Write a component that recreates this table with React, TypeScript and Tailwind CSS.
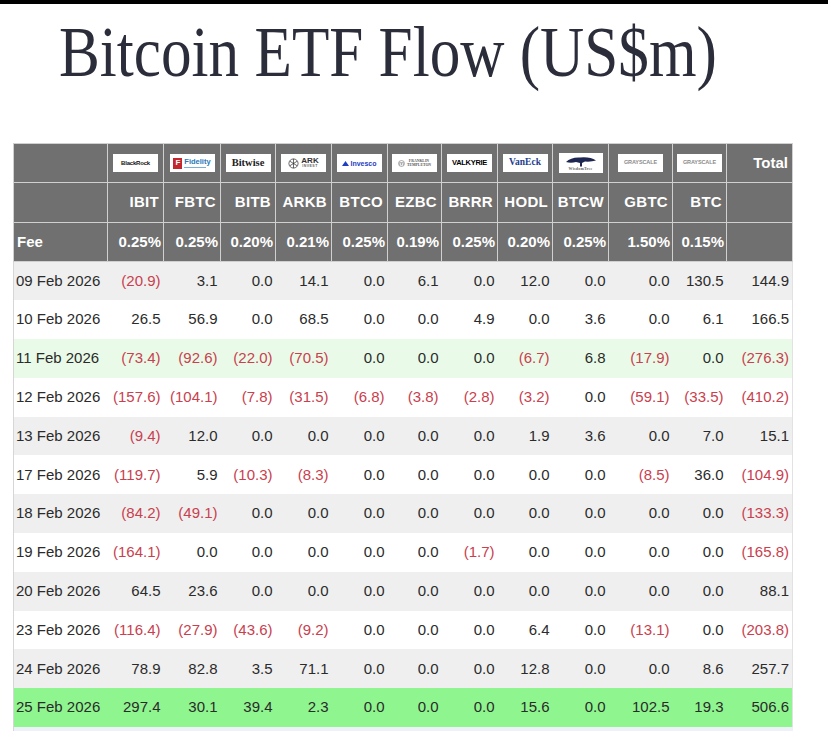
import React from "react";

type Row = { date: string; vals: string[]; tone: "gray" | "white" | "mint" | "green" };

const rows: Row[] = [
  { date: "09 Feb 2026", tone: "gray", vals: ["(20.9)", "3.1", "0.0", "14.1", "0.0", "6.1", "0.0", "12.0", "0.0", "0.0", "130.5", "144.9"] },
  { date: "10 Feb 2026", tone: "white", vals: ["26.5", "56.9", "0.0", "68.5", "0.0", "0.0", "4.9", "0.0", "3.6", "0.0", "6.1", "166.5"] },
  { date: "11 Feb 2026", tone: "mint", vals: ["(73.4)", "(92.6)", "(22.0)", "(70.5)", "0.0", "0.0", "0.0", "(6.7)", "6.8", "(17.9)", "0.0", "(276.3)"] },
  { date: "12 Feb 2026", tone: "white", vals: ["(157.6)", "(104.1)", "(7.8)", "(31.5)", "(6.8)", "(3.8)", "(2.8)", "(3.2)", "0.0", "(59.1)", "(33.5)", "(410.2)"] },
  { date: "13 Feb 2026", tone: "gray", vals: ["(9.4)", "12.0", "0.0", "0.0", "0.0", "0.0", "0.0", "1.9", "3.6", "0.0", "7.0", "15.1"] },
  { date: "17 Feb 2026", tone: "white", vals: ["(119.7)", "5.9", "(10.3)", "(8.3)", "0.0", "0.0", "0.0", "0.0", "0.0", "(8.5)", "36.0", "(104.9)"] },
  { date: "18 Feb 2026", tone: "gray", vals: ["(84.2)", "(49.1)", "0.0", "0.0", "0.0", "0.0", "0.0", "0.0", "0.0", "0.0", "0.0", "(133.3)"] },
  { date: "19 Feb 2026", tone: "white", vals: ["(164.1)", "0.0", "0.0", "0.0", "0.0", "0.0", "(1.7)", "0.0", "0.0", "0.0", "0.0", "(165.8)"] },
  { date: "20 Feb 2026", tone: "gray", vals: ["64.5", "23.6", "0.0", "0.0", "0.0", "0.0", "0.0", "0.0", "0.0", "0.0", "0.0", "88.1"] },
  { date: "23 Feb 2026", tone: "white", vals: ["(116.4)", "(27.9)", "(43.6)", "(9.2)", "0.0", "0.0", "0.0", "6.4", "0.0", "(13.1)", "0.0", "(203.8)"] },
  { date: "24 Feb 2026", tone: "gray", vals: ["78.9", "82.8", "3.5", "71.1", "0.0", "0.0", "0.0", "12.8", "0.0", "0.0", "8.6", "257.7"] },
  { date: "25 Feb 2026", tone: "green", vals: ["297.4", "30.1", "39.4", "2.3", "0.0", "0.0", "0.0", "15.6", "0.0", "102.5", "19.3", "506.6"] },
];

const tickers = ["IBIT", "FBTC", "BITB", "ARKB", "BTCO", "EZBC", "BRRR", "HODL", "BTCW", "GBTC", "BTC"];
const fees = ["0.25%", "0.25%", "0.20%", "0.21%", "0.25%", "0.19%", "0.25%", "0.20%", "0.25%", "1.50%", "0.15%"];

const colWidths = ["w-[94px]", "w-[56px]", "w-[57px]", "w-[55px]", "w-[56px]", "w-[56px]", "w-[54px]", "w-[56px]", "w-[55px]", "w-[56px]", "w-[64px]", "w-[54px]", "w-[66px]"];

const toneBg: Record<Row["tone"], string> = {
  gray: "bg-[#efefef]",
  white: "bg-white",
  mint: "bg-[#e9fbe8]",
  green: "bg-[#8ff58f]",
};

// small stand-ins for the fund sponsor logos
function LogoBox({ children }: { children: React.ReactNode }) {
  return (
    <div className="mx-auto flex h-[18px] w-[45px] items-center justify-center overflow-hidden bg-white">
      {children}
    </div>
  );
}

function Logo({ i }: { i: number }) {
  switch (i) {
    case 0:
      return (
        <LogoBox>
          <span className="text-[6px] font-bold tracking-[-0.2px] text-[#111]">BlackRock</span>
        </LogoBox>
      );
    case 1:
      return (
        <LogoBox>
          <div className="flex items-center gap-[2px]">
            <span className="flex h-[11px] w-[9px] items-center justify-center bg-[#c4262e] text-[8px] font-bold leading-none text-white">F</span>
            <div className="flex flex-col items-start leading-none">
              <span className="text-[7.5px] text-[#2a78b8]">Fidelity</span>
              <span className="mt-[1px] h-[1px] w-[22px] bg-[#7ab0d6]" />
            </div>
          </div>
        </LogoBox>
      );
    case 2:
      return (
        <LogoBox>
          <span className="font-['Liberation_Serif',serif] text-[10.5px] leading-none text-[#222]">Bitwise</span>
        </LogoBox>
      );
    case 3:
      return (
        <LogoBox>
          <div className="flex items-center gap-[2px]">
            <svg width="11" height="11" viewBox="0 0 12 12" fill="none" stroke="#333" strokeWidth="0.8">
              <circle cx="6" cy="6" r="5" />
              <path d="M6 1v10M2 3.5l8 5M2 8.5l8-5" />
            </svg>
            <div className="flex flex-col leading-none">
              <span className="text-[8px] font-bold text-[#333]">ARK</span>
              <span className="text-[3.5px] tracking-[0.5px] text-[#666]">INVEST</span>
            </div>
          </div>
        </LogoBox>
      );
    case 4:
      return (
        <LogoBox>
          <div className="flex items-center gap-[1px]">
            <svg width="7" height="5" viewBox="0 0 7 5">
              <path d="M0 5 L3.5 0 L7 5 Z" fill="#1f3ec0" />
            </svg>
            <span className="text-[7px] leading-none text-[#1f3ec0]">Invesco</span>
          </div>
        </LogoBox>
      );
    case 5:
      return (
        <LogoBox>
          <div className="flex items-center gap-[2px]">
            <svg width="7" height="7" viewBox="0 0 8 8" fill="none" stroke="#777" strokeWidth="0.7">
              <circle cx="4" cy="4" r="3.4" />
              <path d="M2 6V3.5M4 6V3.5M6 6V3.5M1.5 3h5" />
            </svg>
            <div className="flex flex-col font-['Liberation_Serif',serif] text-[3.8px] leading-[4.5px] text-[#555]">
              <span>FRANKLIN</span>
              <span>TEMPLETON</span>
            </div>
          </div>
        </LogoBox>
      );
    case 6:
      return (
        <LogoBox>
          <span className="text-[7.5px] font-bold tracking-[-0.3px] text-black">VALKYRIE</span>
        </LogoBox>
      );
    case 7:
      return (
        <LogoBox>
          <span className="font-['Liberation_Serif',serif] text-[9.5px] font-bold leading-none text-[#1e3d8c]">VanEck</span>
        </LogoBox>
      );
    case 8:
      return (
        <div className="mx-auto flex h-[20px] w-[44px] flex-col items-center justify-center bg-white">
          <svg width="34" height="11" viewBox="0 0 34 11">
            <path d="M2 6 Q7 1 16 1.5 Q26 0.5 32 4.5 Q27 6 21 5.5 L18 7 L18 10.5 L16 10.5 L16 7 L12 6 Q7 7.5 2 6 Z" fill="#1e2752" />
          </svg>
          <span className="font-['Liberation_Serif',serif] text-[4px] leading-none tracking-[0.2px] text-[#666]">WisdomTree</span>
        </div>
      );
    default:
      return (
        <LogoBox>
          <span className="text-[5.5px] leading-none tracking-[-0.1px] text-[#8a8a8a]">GRAYSCALE</span>
        </LogoBox>
      );
  }
}

const headCell = "border border-[#d0d0d0] bg-[#707070] text-[15px] font-bold text-white align-middle";

export default function App() {
  return (
    <div className="min-h-screen bg-white font-['Liberation_Sans',Arial,sans-serif]">
      <div className="h-[4px] bg-black" />
      <div className="mt-[12px] pl-[59px]">
        <h1 className="inline-block origin-left scale-x-[0.85] whitespace-nowrap font-['Liberation_Serif','Times_New_Roman',serif] text-[72px] font-normal leading-[72px] text-[#2b2d3a]">
          Bitcoin ETF Flow (US$m)
        </h1>
      </div>

      <div className="mt-[55px] pl-[13px]">
        <table className="w-[780px] table-fixed border-collapse">
          <colgroup>
            {colWidths.map((w, i) => (
              <col key={i} className={w} />
            ))}
          </colgroup>
          <thead>
            <tr className="h-[39px]">
              <th className={headCell} />
              {tickers.map((t, i) => (
                <th key={t} className={headCell + " px-0"}>
                  <Logo i={i} />
                </th>
              ))}
              <th className={headCell + " pr-[4px] text-right"}>Total</th>
            </tr>
            <tr className="h-[40px]">
              <th className={headCell} />
              {tickers.map((t) => (
                <th key={t} className={headCell + " pr-[4px] text-right tracking-[0.3px]"}>
                  {t}
                </th>
              ))}
              <th className={headCell} />
            </tr>
            <tr className="h-[39px]">
              <th className={headCell + " pl-[3px] text-left"}>Fee</th>
              {fees.map((f, i) => (
                <th key={i} className={headCell + " px-[2px] text-right text-[15.5px]"}>
                  {f}
                </th>
              ))}
              <th className={headCell} />
            </tr>
          </thead>
          <tbody className="text-[15px] text-[#2b2b2b]">
            {rows.map((r) => (
              <tr key={r.date} className={"h-[38.8px] " + toneBg[r.tone]}>
                <td className="whitespace-nowrap border-l border-[#d6d6d6] pl-[2px]">{r.date}</td>
                {r.vals.map((v, i) => (
                  <td
                    key={i}
                    className={
                      "whitespace-nowrap pr-[3px] text-right " +
                      (v.startsWith("(") ? "text-[#c9404e] " : "") +
                      (i === r.vals.length - 1 ? "border-r border-[#e2e2e2]" : "")
                    }
                  >
                    {v}
                  </td>
                ))}
              </tr>
            ))}
            <tr className="h-[20px] bg-[#eef0fa]">
              <td colSpan={13} className="border-l border-[#d6d6d6]" />
            </tr>
          </tbody>
        </table>
      </div>
    </div>
  );
}
